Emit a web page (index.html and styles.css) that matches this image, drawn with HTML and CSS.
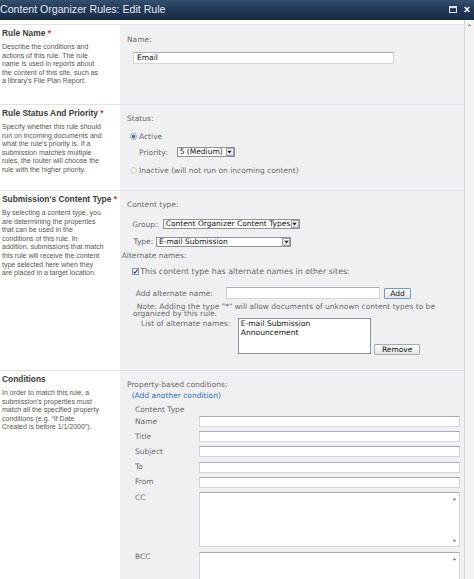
FILE: index.html
```html
<!DOCTYPE html>
<html>
<head>
<meta charset="utf-8">
<title>Content Organizer Rules: Edit Rule</title>
<link rel="stylesheet" href="styles.css">
</head>
<body>
<div class="titlebar">
  <span class="title">Content Organizer Rules: Edit Rule</span>
  <span class="winbtns">
    <svg class="maxbtn" width="8" height="7" viewBox="0 0 8 7"><rect x="0.5" y="0.5" width="7" height="6" fill="none" stroke="#dfe6ee"/><rect x="0.5" y="0.5" width="7" height="1.6" fill="#dfe6ee"/></svg>
    <svg class="closebtn" width="6" height="7" viewBox="0 0 6 7"><path d="M0.7 1L5.3 6M5.3 1L0.7 6" stroke="#f2f5f8" stroke-width="1.6"/></svg>
  </span>
</div>
<div class="main">
  <div class="content">
    <section class="sec sec1">
      <div class="left">
        <div class="head">Rule Name <span class="req">*</span></div>
        <div class="desc">Describe the conditions and<br>actions of this rule. The rule<br>name is used in reports about<br>the content of this site, such as<br>a library's File Plan Report.</div>
      </div>
      <div class="right">
        <div class="lbl">Name:</div>
        <div class="textbox name-box">Email</div>
      </div>
    </section>

    <section class="sec sec2">
      <div class="left">
        <div class="head">Rule Status And Priority <span class="req">*</span></div>
        <div class="desc">Specify whether this rule should<br>run on incoming documents and<br>what the rule's priority is. If a<br>submission matches multiple<br>rules, the router will choose the<br>rule with the higher priority.</div>
      </div>
      <div class="right">
        <div class="lbl">Status:</div>
        <div class="radio-row r-active">
          <svg class="radio" width="7" height="7" viewBox="0 0 7 7"><circle cx="3.5" cy="3.5" r="3" fill="#f4f6f9" stroke="#8d949d" stroke-width="0.8"/><circle cx="3.5" cy="3.5" r="1.8" fill="#3f70b4"/></svg>
          <span>Active</span>
        </div>
        <div class="prio-row">
          <span class="prio-lbl">Priority:</span>
          <span class="select sel-prio"><span class="sel-text">5 (Medium)</span><span class="sel-btn"><svg width="5" height="4" viewBox="0 0 5 4"><path d="M0.3 0.8H4.7L2.5 3.4Z" fill="#1e1e1e"/></svg></span></span>
        </div>
        <div class="radio-row r-inactive">
          <svg class="radio" width="7" height="7" viewBox="0 0 7 7"><circle cx="3.5" cy="3.5" r="3" fill="#f3f3f3" stroke="#bfc3c8" stroke-width="0.8"/></svg>
          <span>Inactive (will not run on incoming content)</span>
        </div>
      </div>
    </section>

    <section class="sec sec3">
      <div class="left">
        <div class="head">Submission's Content Type <span class="req">*</span></div>
        <div class="desc">By selecting a content type, you<br>are determining the properties<br>that can be used in the<br>conditions of this rule. In<br>addition, submissions that match<br>this rule will receive the content<br>type selected here when they<br>are placed in a target location.</div>
      </div>
      <div class="right">
        <div class="lbl">Content type:</div>
        <div class="sel-row group-row">
          <span class="l-group">Group:</span>
          <span class="select sel-group"><span class="sel-text">Content Organizer Content Types</span><span class="sel-btn"><svg width="5" height="4" viewBox="0 0 5 4"><path d="M0.3 0.8H4.7L2.5 3.4Z" fill="#1e1e1e"/></svg></span></span>
        </div>
        <div class="sel-row type-row">
          <span class="l-type">Type:</span>
          <span class="select sel-type"><span class="sel-text">E-mail Submission</span><span class="sel-btn"><svg width="5" height="4" viewBox="0 0 5 4"><path d="M0.3 0.8H4.7L2.5 3.4Z" fill="#1e1e1e"/></svg></span></span>
        </div>
        <div class="lbl alt-lbl">Alternate names:</div>
        <div class="chk-row">
          <svg class="chk" width="7" height="7" viewBox="0 0 7 7"><rect x="0.4" y="0.4" width="6.2" height="6.2" fill="#eef1f5" stroke="#7e8792" stroke-width="0.8"/><path d="M1.5 3.6L2.9 5.1L5.6 1.6" fill="none" stroke="#27497f" stroke-width="1.1"/></svg>
          <span class="chk-text">This content type has alternate names in other sites:</span>
        </div>
        <div class="add-row">
          <span class="l-add">Add alternate name:</span>
          <span class="textbox add-box"></span>
          <span class="btn btn-add">Add</span>
        </div>
        <div class="note">Note: Adding the type "*" will allow documents of unknown content types to be<br>organized by this rule.</div>
        <div class="list-row">
          <span class="l-list">List of alternate names:</span>
          <div class="listbox"><div>E-mail Submission</div><div>Announcement</div></div>
          <span class="btn btn-remove">Remove</span>
        </div>
      </div>
    </section>

    <section class="sec sec4">
      <div class="left">
        <div class="head">Conditions</div>
        <div class="desc">In order to match this rule, a<br>submission's properties must<br>match all the specified property<br>conditions (e.g. “If Date<br>Created is before 1/1/2000”).</div>
      </div>
      <div class="right">
        <div class="lbl">Property-based conditions:</div>
        <div class="link">(Add another condition)</div>
        <div class="lbl ct-lbl">Content Type</div>
        <div class="fields">
          <span class="f-lbl">Name</span><span class="textbox f-in"></span>
          <span class="f-lbl">Title</span><span class="textbox f-in"></span>
          <span class="f-lbl">Subject</span><span class="textbox f-in"></span>
          <span class="f-lbl">To</span><span class="textbox f-in"></span>
          <span class="f-lbl">From</span><span class="textbox f-in"></span>
          <span class="f-lbl">CC</span>
          <div class="textbox f-area cc">
            <div class="ta-scroll">
              <svg width="5" height="4" viewBox="0 0 5 4"><path d="M0.5 3.2H4.5L2.5 0.8Z" fill="#8a8a8a"/></svg>
              <svg width="5" height="4" viewBox="0 0 5 4"><path d="M0.5 0.8H4.5L2.5 3.2Z" fill="#8a8a8a"/></svg>
            </div>
          </div>
          <span class="f-lbl">BCC</span>
          <div class="textbox f-area bcc">
            <div class="ta-scroll">
              <svg width="5" height="4" viewBox="0 0 5 4"><path d="M0.5 3.2H4.5L2.5 0.8Z" fill="#8a8a8a"/></svg>
            </div>
          </div>
        </div>
      </div>
    </section>
  </div>
  <div class="vscroll">
    <svg width="5" height="4" viewBox="0 0 5 4"><path d="M0.5 3.2H4.5L2.5 0.8Z" fill="#9a9a9a"/></svg>
  </div>
</div>
</body>
</html>
```

FILE: styles.css
```css
* { box-sizing: border-box; margin: 0; padding: 0; }

html, body {
  width: 474px;
  height: 579px;
  overflow: hidden;
  background: #ffffff;
}

body {
  font-family: "DejaVu Sans", Verdana, sans-serif;
  font-size: 7.5px;
  color: #6a6a6a;
}

/* ---------- title bar ---------- */
.titlebar {
  height: 20px;
  display: flex;
  align-items: center;
  justify-content: space-between;
  padding: 0 4px 0 0;
  background: linear-gradient(#35516f 0%, #22395a 45%, #1b2e47 100%);
  border-bottom: 1px solid #16263b;
}

.title {
  font-family: "Liberation Sans", Arial, sans-serif;
  font-size: 10.6px;
  line-height: 19px;
  color: #e4eaf1;
  white-space: nowrap;
}

.winbtns {
  display: flex;
  align-items: center;
  gap: 7px;
}

/* ---------- main area ---------- */
.main {
  display: flex;
  height: 559px;
}

.content {
  flex: 1;
  display: flex;
  flex-direction: column;
  padding-top: 4px;
  border-right: 1px solid #d6d7db;
  background: #ffffff;
}

.vscroll {
  width: 9px;
  background: #f4f4f5;
  display: flex;
  justify-content: center;
  padding-top: 3px;
}

/* ---------- sections ---------- */
.sec {
  display: flex;
  flex: none;
  border-top: 1px solid #e1e2e5;
}

.sec1 { height: 80px; }
.sec2 { height: 86px; }
.sec3 { height: 180px; }
.sec4 { flex: 1; }

.left {
  width: 120px;
  flex: none;
  padding: 3px 0 0 2px;
  background: #ffffff;
}

.right {
  flex: 1;
  background: #f0f0f2;
  padding: 9px 0 0 7px;
}

.sec1 .right { padding-top: 10px; }

.head {
  font-family: "Liberation Sans", Arial, sans-serif;
  font-weight: bold;
  font-size: 8.4px;
  line-height: 10px;
  color: #3b3b3b;
  white-space: nowrap;
}

.req { color: #d42a2a; }

.desc {
  font-family: "Liberation Sans", Arial, sans-serif;
  font-size: 7px;
  line-height: 8.6px;
  color: #555555;
  margin-top: 5px;
  white-space: nowrap;
}

.lbl {
  line-height: 9px;
  white-space: nowrap;
}

/* ---------- controls ---------- */
.textbox {
  display: block;
  background: #ffffff;
  border: 1px solid #d3d5d9;
  border-top-color: #a9adb3;
  color: #111111;
}

.select {
  display: flex;
  align-items: center;
  height: 10px;
  background: #ffffff;
  border: 1px solid #8e939a;
  color: #111111;
}

.sel-text {
  flex: 1;
  padding-left: 2px;
  line-height: 8px;
  white-space: nowrap;
  overflow: hidden;
}

.sel-btn {
  flex: none;
  width: 8px;
  height: 8px;
  border: 1px solid #9fa4aa;
  background: linear-gradient(#ffffff, #dcdfe3);
  display: flex;
  align-items: center;
  justify-content: center;
}

.btn {
  display: flex;
  align-items: center;
  justify-content: center;
  height: 11px;
  border: 1px solid #a6aab0;
  border-radius: 1px;
  background: linear-gradient(#fdfdfd, #e3e5e8);
  color: #111111;
  line-height: 9px;
}

/* section 1 */
.name-box {
  width: 261px;
  height: 12px;
  margin: 8px 0 0 6px;
  padding-left: 3px;
  line-height: 10px;
}

/* section 2 */
.radio-row {
  display: flex;
  align-items: center;
  gap: 2px;
  height: 10px;
  margin-left: 3px;
  white-space: nowrap;
}

.r-active { margin-top: 8px; }
.r-inactive { margin-top: 8px; }

.prio-row {
  display: flex;
  align-items: center;
  height: 10px;
  margin-top: 6px;
  padding-left: 12px;
}

.prio-lbl { width: 37.7px; white-space: nowrap; }
.sel-prio { width: 58px; }

/* section 3 */
.sel-row {
  display: flex;
  align-items: center;
  height: 10px;
  white-space: nowrap;
}

.group-row { margin-top: 10px; padding-left: 5.3px; }
.l-group { width: 30.4px; }
.sel-group { width: 137.3px; }

.type-row { margin-top: 7.5px; padding-left: 6.5px; }
.l-type { width: 22.5px; }
.sel-type { width: 135px; }

.alt-lbl { margin: 4px 0 0 -5.3px; }

.chk-row {
  display: flex;
  align-items: center;
  gap: 1.5px;
  height: 10px;
  margin-top: 7px;
  padding-left: 4.7px;
  white-space: nowrap;
}

.chk-text { font-size: 7.9px; }

.add-row {
  display: flex;
  align-items: center;
  height: 12px;
  margin-top: 10.5px;
  padding-left: 8.7px;
  white-space: nowrap;
}

.l-add { width: 90.3px; }
.add-box { width: 154px; height: 12px; }
.btn-add {
  width: 27px;
  margin-left: 4px;
  border-color: #6f9bd0;
}

.note {
  margin-top: 3.5px;
  padding-left: 6px;
  text-indent: 3.7px;
  line-height: 7.5px;
  white-space: nowrap;
}

.list-row {
  display: flex;
  align-items: flex-start;
  margin-top: 0.8px;
  padding-left: 14px;
}

.l-list {
  width: 96.7px;
  line-height: 9px;
  margin-top: 0.5px;
  white-space: nowrap;
}

.listbox {
  width: 133.3px;
  height: 35.7px;
  background: #ffffff;
  border: 1px solid #8e939a;
  color: #111111;
  font-size: 7.6px;
  line-height: 9px;
  padding-left: 2px;
  white-space: nowrap;
}

.btn-remove {
  width: 45.7px;
  margin-left: 3.3px;
  align-self: flex-end;
  margin-bottom: -1px;
}

/* section 4 */
.link {
  color: #2f6fb6;
  line-height: 9px;
  margin: 1.5px 0 0 4.7px;
  white-space: nowrap;
}

.ct-lbl { margin: 5px 0 0 8px; }

.fields {
  display: grid;
  grid-template-columns: 64px 261px;
  row-gap: 4.2px;
  margin-top: 2.5px;
  padding-left: 8px;
}

.f-lbl {
  line-height: 9px;
  padding-top: 0.7px;
  white-space: nowrap;
}

.f-in { height: 11px; }

.f-area {
  display: flex;
  justify-content: flex-end;
}

.cc { height: 55.5px; }
.bcc { height: 40px; }

.ta-scroll {
  width: 10px;
  display: flex;
  flex-direction: column;
  justify-content: space-between;
  align-items: center;
  padding: 4px 0 3px;
}

.bcc .ta-scroll { justify-content: flex-start; }
```
